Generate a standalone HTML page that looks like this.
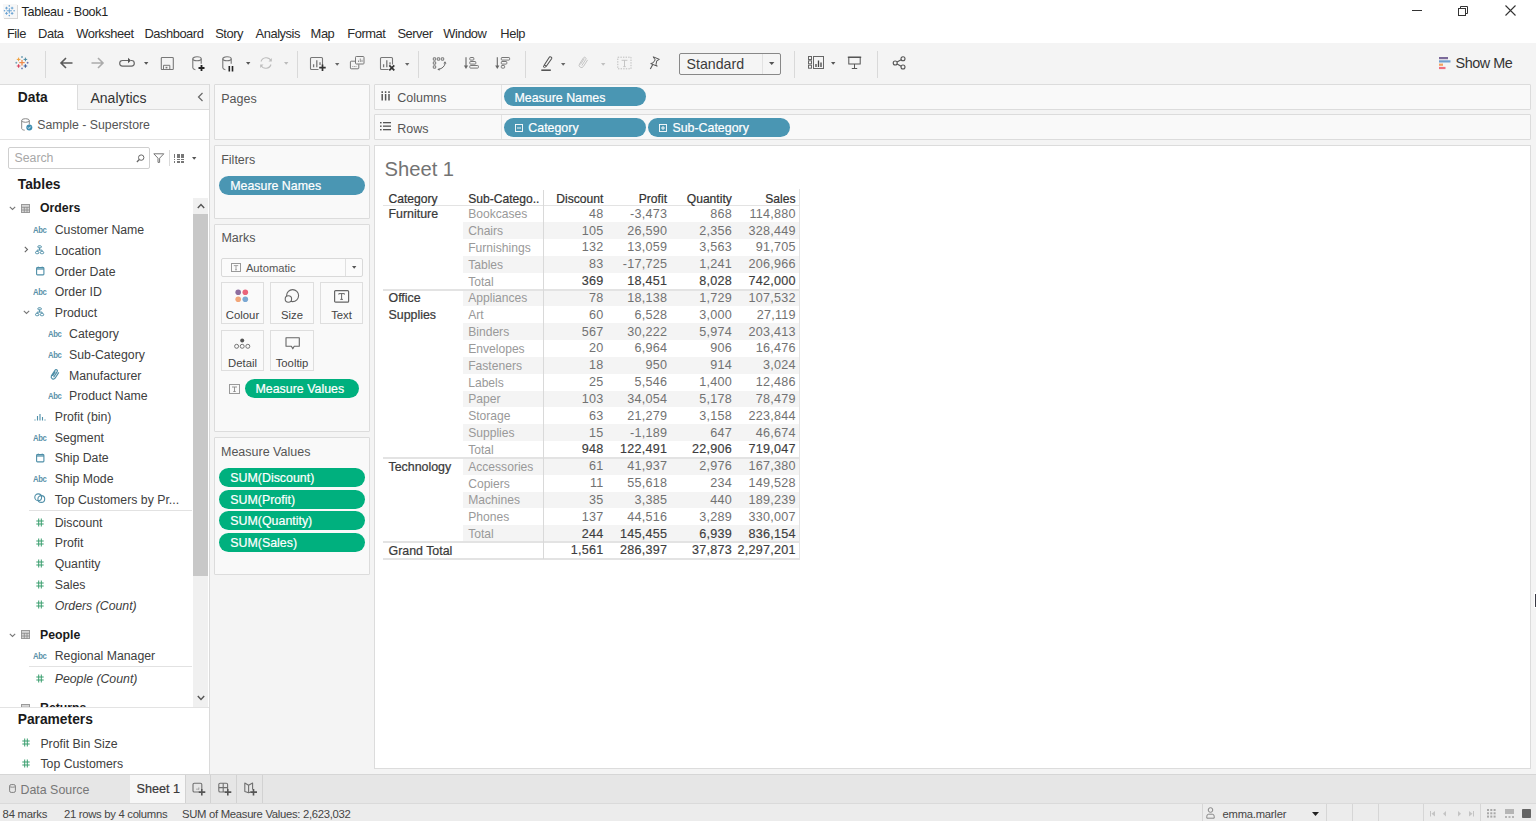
<!DOCTYPE html>
<html><head><meta charset="utf-8">
<style>
*{box-sizing:border-box;margin:0;padding:0}
html,body{width:1536px;height:821px;overflow:hidden;background:#f4f4f4;font-family:"Liberation Sans",sans-serif;color:#333}
.a{position:absolute}
svg.a{overflow:visible}
.t{position:absolute;white-space:nowrap;line-height:1}
.box{position:absolute;background:#f9f9f9;border:1px solid #dcdcdc;border-radius:1px}
</style></head><body>

<div class="a" style="left:0px;top:0px;width:1536px;height:43px;background:#fff;"></div>
<svg class="a" style="left:3px;top:4px;" width="15" height="15" viewBox="0 0 15 15" fill="none"><rect x="0" y="0" width="14" height="14" fill="#f7f7f7"/><rect x="14" y="1" width="1" height="14" fill="#d6d6d6"/><rect x="1" y="14" width="14" height="1" fill="#d6d6d6"/><g stroke="#6aa3d3" stroke-width="1"><path d="M6.3 4.2v5.2M3.7 6.8h5.2"/><path d="M3.5 2.8v2.6M2.2 4.1h2.6M9.1 2.8v2.6M7.8 4.1h2.6M3.5 8.1v2.6M2.2 9.4h2.6M9.1 8.1v2.6M7.8 9.4h2.6"/></g><g fill="#6aa3d3"><circle cx="6.3" cy="1.9" r="0.8"/><circle cx="6.3" cy="11.6" r="0.8"/><circle cx="1.5" cy="6.8" r="0.8"/><circle cx="11.1" cy="6.8" r="0.8"/></g></svg>
<div class="t" style="left:21.50px;top:6.03px;font-size:12.6px;color:#1f1f1f;font-weight:normal;font-style:normal;letter-spacing:-0.3px;">Tableau - Book1</div>
<div class="a" style="left:1412px;top:10px;width:10px;height:1px;background:#333;"></div>
<svg class="a" style="left:1457px;top:5px;" width="12" height="12" viewBox="0 0 12 12" fill="none"><rect x="1.5" y="3.5" width="7" height="7" stroke="#333" stroke-width="1"/><path d="M3.5 3.5V1.5h7v7h-2" stroke="#333" stroke-width="1"/></svg>
<svg class="a" style="left:1505px;top:5px;" width="11" height="11" viewBox="0 0 11 11" fill="none"><path d="M0.5 0.5l10 10M10.5 0.5l-10 10" stroke="#333" stroke-width="1.1"/></svg>
<div class="t" style="left:6.90px;top:28.38px;font-size:12.9px;color:#2b2b2b;font-weight:normal;font-style:normal;letter-spacing:-0.45px;">File</div>
<div class="t" style="left:38.10px;top:28.38px;font-size:12.9px;color:#2b2b2b;font-weight:normal;font-style:normal;letter-spacing:-0.45px;">Data</div>
<div class="t" style="left:76.20px;top:28.38px;font-size:12.9px;color:#2b2b2b;font-weight:normal;font-style:normal;letter-spacing:-0.45px;">Worksheet</div>
<div class="t" style="left:144.40px;top:28.38px;font-size:12.9px;color:#2b2b2b;font-weight:normal;font-style:normal;letter-spacing:-0.45px;">Dashboard</div>
<div class="t" style="left:215.20px;top:28.38px;font-size:12.9px;color:#2b2b2b;font-weight:normal;font-style:normal;letter-spacing:-0.45px;">Story</div>
<div class="t" style="left:255.60px;top:28.38px;font-size:12.9px;color:#2b2b2b;font-weight:normal;font-style:normal;letter-spacing:-0.45px;">Analysis</div>
<div class="t" style="left:310.60px;top:28.38px;font-size:12.9px;color:#2b2b2b;font-weight:normal;font-style:normal;letter-spacing:-0.45px;">Map</div>
<div class="t" style="left:347.30px;top:28.38px;font-size:12.9px;color:#2b2b2b;font-weight:normal;font-style:normal;letter-spacing:-0.45px;">Format</div>
<div class="t" style="left:397.40px;top:28.38px;font-size:12.9px;color:#2b2b2b;font-weight:normal;font-style:normal;letter-spacing:-0.45px;">Server</div>
<div class="t" style="left:443.30px;top:28.38px;font-size:12.9px;color:#2b2b2b;font-weight:normal;font-style:normal;letter-spacing:-0.45px;">Window</div>
<div class="t" style="left:500.30px;top:28.38px;font-size:12.9px;color:#2b2b2b;font-weight:normal;font-style:normal;letter-spacing:-0.45px;">Help</div>
<div class="a" style="left:0px;top:43px;width:1536px;height:41px;background:#f4f4f4;"></div>
<div class="a" style="left:45px;top:51px;width:1px;height:27px;background:#d9d9d9;"></div>
<div class="a" style="left:297px;top:51px;width:1px;height:27px;background:#d9d9d9;"></div>
<div class="a" style="left:418px;top:51px;width:1px;height:27px;background:#d9d9d9;"></div>
<div class="a" style="left:525px;top:51px;width:1px;height:27px;background:#d9d9d9;"></div>
<div class="a" style="left:794px;top:51px;width:1px;height:27px;background:#d9d9d9;"></div>
<div class="a" style="left:877px;top:51px;width:1px;height:27px;background:#d9d9d9;"></div>
<svg class="a" style="left:14px;top:55px;" width="16" height="16" viewBox="0 0 16 16" fill="none"><g stroke-linecap="butt"><path d="M8 5v5.4M5.3 7.7h5.4" stroke="#f08a4b" stroke-width="1.3"/><path d="M4.6 2.6v3.6M2.8 4.4h3.6" stroke="#f0a03c" stroke-width="1"/><path d="M11.4 2.6v3.6M9.6 4.4h3.6" stroke="#4c8aa3" stroke-width="1"/><path d="M4.6 9.2v3.6M2.8 11h3.6" stroke="#d9415c" stroke-width="1.1"/><path d="M11.4 9.2v3.6M9.6 11h3.6" stroke="#3d5f9c" stroke-width="1.1"/></g><circle cx="8" cy="2" r="0.95" fill="#6f9fb4"/><circle cx="8" cy="13.4" r="0.95" fill="#7683b3"/><circle cx="2.3" cy="7.7" r="0.95" fill="#79a6b6"/><circle cx="13.6" cy="7.7" r="0.95" fill="#6e72aa"/></svg>
<svg class="a" style="left:60px;top:57px;" width="13" height="12" viewBox="0 0 13 12" fill="none"><path d="M12.5 6H1.2M6 1L1 6l5 5" stroke="#5a5a5a" stroke-width="1.6"/></svg>
<svg class="a" style="left:91px;top:57px;" width="13" height="12" viewBox="0 0 13 12" fill="none"><path d="M0.5 6h11.3M7 1l5 5-5 5" stroke="#ababab" stroke-width="1.6"/></svg>
<svg class="a" style="left:119px;top:57px;" width="17" height="11" viewBox="0 0 17 11" fill="none"><path d="M9 3.5H3.5a2.8 2.8 0 0 0 0 5.6h9a2.8 2.8 0 0 0 0-5.6H12" stroke="#666" stroke-width="1.2"/><path d="M9 0.8l3 2.7-3 2.7z" fill="#555"/></svg>
<svg class="a" style="left:144.3px;top:62.1px;" width="5" height="3" viewBox="0 0 5 3" fill="none"><path d="M0 0h4.4l-2.2 2.7z" fill="#555"/></svg>
<svg class="a" style="left:160px;top:56px;" width="14" height="14" viewBox="0 0 14 14" fill="none"><rect x="1.3" y="1.5" width="12" height="12" rx="0.8" stroke="#777" stroke-width="1.1"/><path d="M3.5 13.5V9.3h6.3v4.2" stroke="#777" stroke-width="1"/><rect x="5.6" y="10.8" width="1.8" height="1.6" fill="#777"/></svg>
<svg class="a" style="left:192px;top:56px;" width="13" height="16" viewBox="0 0 13 16" fill="none"><ellipse cx="5" cy="2.8" rx="4.2" ry="2" stroke="#777" stroke-width="1.1"/><path d="M0.8 2.8v9c0 1 1 1.6 2.6 1.9M9.2 2.8v5" stroke="#777" stroke-width="1.1"/><path d="M9.5 9v6M6.5 12h6" stroke="#222" stroke-width="1.8"/></svg>
<svg class="a" style="left:222px;top:56px;" width="13" height="16" viewBox="0 0 13 16" fill="none"><ellipse cx="5" cy="2.8" rx="4.2" ry="2" stroke="#777" stroke-width="1.1"/><path d="M0.8 2.8v9c0 1 1 1.6 2.6 1.9M9.2 2.8v5" stroke="#777" stroke-width="1.1"/><path d="M7.3 10v5.5M10.5 10v5.5" stroke="#222" stroke-width="1.6"/></svg>
<svg class="a" style="left:245.5px;top:62.1px;" width="5" height="3" viewBox="0 0 5 3" fill="none"><path d="M0 0h4.4l-2.2 2.7z" fill="#555"/></svg>
<svg class="a" style="left:259px;top:56px;" width="14" height="14" viewBox="0 0 14 14" fill="none"><path d="M2 5.5A5.5 5.5 0 0 1 12 4.5M12 8.5A5.5 5.5 0 0 1 2 9.5" stroke="#bdbdbd" stroke-width="1.1"/><path d="M12.8 2v3.5H9.5z" fill="#bdbdbd"/><path d="M1.2 12V8.5H4.5z" fill="#bdbdbd"/></svg>
<svg class="a" style="left:284.0px;top:62.1px;" width="5" height="3" viewBox="0 0 5 3" fill="none"><path d="M0 0h4.4l-2.2 2.7z" fill="#bbb"/></svg>
<svg class="a" style="left:309px;top:56px;" width="17" height="17" viewBox="0 0 17 17" fill="none"><rect x="1.5" y="1.5" width="12" height="12" rx="1" stroke="#777" stroke-width="1.1"/><path d="M4.6 11.2V8.2M7.8 11.2V4.2M11 11.2V6.2" stroke="#777" stroke-width="1.3"/><rect x="9.5" y="9" width="7" height="7" fill="#f4f4f4"/><path d="M13.5 8.5v6.5M10.2 11.7h6.5" stroke="#333" stroke-width="1.7"/></svg>
<svg class="a" style="left:335.1px;top:62.6px;" width="5" height="3" viewBox="0 0 5 3" fill="none"><path d="M0 0h4.4l-2.2 2.7z" fill="#666"/></svg>
<svg class="a" style="left:349px;top:55px;" width="16" height="15" viewBox="0 0 16 15" fill="none"><rect x="6.5" y="1.5" width="8.5" height="7.5" rx="0.8" stroke="#777" stroke-width="1"/><path d="M9.5 7V5.5M11.3 7V3.5M13 7V4.8" stroke="#888" stroke-width="0.9"/><path d="M6.2 6.2H2.2a0.8 0.8 0 0 0-.8.8v6a0.8 0.8 0 0 0 .8.8h6.8a0.8 0.8 0 0 0 .8-.8V9.3" stroke="#777" stroke-width="1"/><path d="M3.8 12v-1M5.4 12v-1M7 12v-1" stroke="#999" stroke-width="0.9"/></svg>
<svg class="a" style="left:379px;top:56px;" width="17" height="17" viewBox="0 0 17 17" fill="none"><rect x="1.5" y="1.5" width="12" height="12" rx="1" stroke="#777" stroke-width="1.1"/><path d="M4.6 11.2V8.2M7.8 11.2V4.2M11 11.2V6.2" stroke="#777" stroke-width="1.3"/><rect x="9.5" y="8.5" width="7" height="7.5" fill="#f4f4f4"/><path d="M10.3 9.3l5 5M15.3 9.3l-5 5" stroke="#333" stroke-width="1.7"/></svg>
<svg class="a" style="left:404.8px;top:62.6px;" width="5" height="3" viewBox="0 0 5 3" fill="none"><path d="M0 0h4.4l-2.2 2.7z" fill="#666"/></svg>
<svg class="a" style="left:432px;top:57px;" width="16" height="14" viewBox="0 0 16 14" fill="none"><g stroke="#777" stroke-width="1"><rect x="1.3" y="0.8" width="2.4" height="2.4" rx="0.2"/><rect x="5.3" y="0.8" width="2.4" height="2.4" rx="0.2"/><rect x="9.3" y="0.8" width="2.4" height="2.4" rx="0.2"/><rect x="1.3" y="4.8" width="2.4" height="2.4" rx="0.2"/><rect x="1.3" y="8.8" width="2.4" height="2.4" rx="0.2"/></g><path d="M13.2 6.3C12.6 9.3 10.3 11.6 6.5 12.4" stroke="#666" stroke-width="1"/><path d="M14.5 6.4l-1.5-2.2-1.6 2.2zM5.3 12.2l2.2 1.6 0.1-2.6z" fill="#666"/></svg>
<svg class="a" style="left:463px;top:56px;" width="17" height="15" viewBox="0 0 17 15" fill="none"><path d="M3 1.3v9" stroke="#666" stroke-width="1.1"/><path d="M0.9 9.5h4.2L3 12.9z" fill="#666"/><g stroke="#777" stroke-width="1"><rect x="6.8" y="1.5" width="4" height="2.6" rx="0.7"/><rect x="6.8" y="5.5" width="6" height="2.6" rx="0.7"/><rect x="6.8" y="9.5" width="8.6" height="2.6" rx="0.7"/></g></svg>
<svg class="a" style="left:494px;top:56px;" width="17" height="15" viewBox="0 0 17 15" fill="none"><path d="M3.3 1.3v9" stroke="#666" stroke-width="1.1"/><path d="M1.2 9.5h4.2L3.3 12.9z" fill="#666"/><g stroke="#777" stroke-width="1"><rect x="7.3" y="1.5" width="8.3" height="2.6" rx="0.7"/><rect x="7.3" y="5.5" width="5.5" height="2.6" rx="0.7"/><rect x="7.3" y="9.5" width="3.3" height="2.6" rx="0.7"/></g></svg>
<svg class="a" style="left:540px;top:55px;" width="13" height="17" viewBox="0 0 13 17" fill="none"><path d="M9.3 2.2a1 1 0 0 1 1.4-.3l.6.4a1 1 0 0 1 .3 1.4L6.3 11.3 4.3 10z" stroke="#555" stroke-width="1.1" stroke-linejoin="round"/><path d="M4.3 10l-1 2 1.5.5 1.5-1.2" stroke="#555" stroke-width="0.9"/><path d="M1.3 15.2h9.5" stroke="#555" stroke-width="1.6"/></svg>
<svg class="a" style="left:561.3px;top:62.6px;" width="5" height="3" viewBox="0 0 5 3" fill="none"><path d="M0 0h4.4l-2.2 2.7z" fill="#666"/></svg>
<svg class="a" style="left:578px;top:56px;" width="11" height="14" viewBox="0 0 11 14" fill="none"><path d="M3.8 9.6l4-6.2a1.4 1.4 0 0 0-2.4-1.5L1.5 8a2.3 2.3 0 0 0 3.9 2.5l4.2-6.6M6.3 2.6L2.4 8.5" stroke="#c4c4c4" stroke-width="1"/></svg>
<svg class="a" style="left:600.5999999999999px;top:62.6px;" width="5" height="3" viewBox="0 0 5 3" fill="none"><path d="M0 0h4.4l-2.2 2.7z" fill="#c0c0c0"/></svg>
<svg class="a" style="left:617px;top:56px;" width="15" height="14" viewBox="0 0 15 14" fill="none"><rect x="0.8" y="1.2" width="13.2" height="11.6" stroke="#bdbdbd" stroke-width="1" stroke-dasharray="1.4 1.2"/><path d="M4.6 4.3h5.8M7.5 4.3v6.3M6.3 10.6h2.4" stroke="#c0c0c0" stroke-width="0.9"/></svg>
<svg class="a" style="left:648px;top:56px;" width="13" height="14" viewBox="0 0 13 14" fill="none"><path d="M5.2 0.8l6.2 2.6-2.6 1.3-0.8 3.7 1.2 1.8-6.5-2.6 2.3-0.7 2.2-3z" stroke="#555" stroke-width="1" stroke-linejoin="round"/><path d="M4.8 8.6L2.3 13" stroke="#555" stroke-width="1.1"/></svg>
<div class="a" style="left:679px;top:53px;width:102px;height:22px;border:1px solid #888;border-radius:2px;background:#f5f5f5"></div>
<div class="a" style="left:762px;top:54px;width:1px;height:20px;background:#e2e2e2;"></div>
<div class="t" style="left:686.50px;top:57.18px;font-size:14.2px;color:#3c3c3c;font-weight:normal;font-style:normal;">Standard</div>
<svg class="a" style="left:768.8px;top:62.2px;" width="6" height="4" viewBox="0 0 6 4" fill="none"><path d="M0 0h5.4L2.7 3z" fill="#555"/></svg>
<svg class="a" style="left:808px;top:56px;" width="16" height="13" viewBox="0 0 16 13" fill="none"><g stroke="#666" stroke-width="1"><rect x="0.5" y="0.5" width="3" height="3"/><rect x="0.5" y="4.8" width="3" height="3"/><rect x="0.5" y="9.2" width="3" height="3"/><rect x="5.5" y="0.5" width="10" height="12"/></g><path d="M8 11V8M10.5 11V4.5M13 11V6.5" stroke="#444" stroke-width="1.3"/></svg>
<svg class="a" style="left:830.8px;top:62.1px;" width="5" height="3" viewBox="0 0 5 3" fill="none"><path d="M0 0h4.4l-2.2 2.7z" fill="#555"/></svg>
<svg class="a" style="left:847px;top:56px;" width="15" height="14" viewBox="0 0 15 14" fill="none"><path d="M0.8 1.3h13.4" stroke="#555" stroke-width="1.4"/><rect x="1.8" y="1.3" width="11.4" height="6.7" stroke="#555" stroke-width="1"/><path d="M7.5 8v4M4.8 12.5h5.4" stroke="#555" stroke-width="1"/></svg>
<svg class="a" style="left:892px;top:56px;" width="14" height="14" viewBox="0 0 14 14" fill="none"><g stroke="#555" stroke-width="1.1"><circle cx="3.2" cy="7" r="2"/><circle cx="11" cy="2.8" r="2"/><circle cx="11" cy="11" r="2"/><path d="M5 6l4.2-2.2M5 8l4.2 2.2"/></g></svg>
<svg class="a" style="left:1439px;top:57px;" width="12" height="13" viewBox="0 0 12 13" fill="none"><rect x="0" y="0" width="9" height="2.2" fill="#7b6a9a"/><rect x="0" y="3.3" width="11.5" height="2.2" fill="#6f9fd0"/><rect x="0" y="6.6" width="4" height="2.2" fill="#f2a15f"/><rect x="0" y="9.9" width="6.5" height="2.2" fill="#ef7080"/></svg>
<div class="t" style="left:1455.50px;top:55.81px;font-size:14.4px;color:#333;font-weight:normal;font-style:normal;letter-spacing:-0.45px;">Show Me</div>
<div class="a" style="left:0px;top:84px;width:209px;height:690px;background:#fff;"></div>
<div class="a" style="left:209px;top:84px;width:1px;height:690px;background:#dadada;"></div>
<div class="a" style="left:77px;top:84px;width:132px;height:26px;background:#f5f5f5;border-left:1px solid #dcdcdc;border-bottom:1px solid #dcdcdc;border-top:1px solid #dcdcdc"></div>
<div class="a" style="left:0px;top:84px;width:77px;height:1px;background:#dcdcdc;"></div>
<div class="t" style="left:17.80px;top:90.92px;font-size:13.8px;color:#1a1a1a;font-weight:bold;font-style:normal;">Data</div>
<div class="t" style="left:90.50px;top:90.95px;font-size:14px;color:#333;font-weight:normal;font-style:normal;">Analytics</div>
<svg class="a" style="left:197px;top:92px;" width="7" height="10" viewBox="0 0 7 10" fill="none"><path d="M5.5 1L1.5 5l4 4" stroke="#666" stroke-width="1.2"/></svg>
<svg class="a" style="left:21px;top:118px;" width="12" height="13" viewBox="0 0 12 13" fill="none"><ellipse cx="4.5" cy="2.5" rx="3.8" ry="1.8" stroke="#888" stroke-width="1"/><path d="M0.7 2.5v8c0 .9 1.1 1.5 3 1.7M8.3 2.5v4" stroke="#888" stroke-width="1"/><circle cx="8.3" cy="9.5" r="3" fill="#3e8db0"/><path d="M6.9 9.5l1 1 1.8-1.9" stroke="#fff" stroke-width="0.9"/></svg>
<div class="t" style="left:37.20px;top:119.29px;font-size:12.3px;color:#555;font-weight:normal;font-style:normal;">Sample - Superstore</div>
<div class="a" style="left:0px;top:139px;width:209px;height:1px;background:#e3e3e3;"></div>
<div class="a" style="left:8px;top:147px;width:142px;height:22px;border:1px solid #cfcfcf;border-radius:2px;background:#fff"></div>
<div class="t" style="left:14.50px;top:152.39px;font-size:12.3px;color:#a8a8a8;font-weight:normal;font-style:normal;">Search</div>
<svg class="a" style="left:136px;top:153.5px;" width="9" height="10" viewBox="0 0 9 10" fill="none"><circle cx="5.2" cy="3.6" r="2.7" stroke="#666" stroke-width="1"/><path d="M3.3 5.5L0.9 8" stroke="#666" stroke-width="1.2"/></svg>
<svg class="a" style="left:153px;top:153px;" width="12" height="11" viewBox="0 0 12 11" fill="none"><path d="M0.8 0.8h10L6.6 5.2v4.2H5V5.2z" stroke="#777" stroke-width="1" stroke-linejoin="round"/></svg>
<div class="a" style="left:169px;top:150px;width:1px;height:16px;background:#dadada;"></div>
<svg class="a" style="left:174px;top:154px;" width="11" height="9" viewBox="0 0 11 9" fill="none"><g fill="#777" shape-rendering="crispEdges"><rect x="0" y="0" width="1.2" height="1.5"/><rect x="2.5" y="0" width="3" height="1.5"/><rect x="6.5" y="0" width="3.5" height="1.5"/><rect x="0" y="2.4" width="1.2" height="1.5"/><rect x="2.5" y="2.4" width="3" height="1.5"/><rect x="6.5" y="2.4" width="3.5" height="1.5"/><rect x="0" y="4.8" width="1.2" height="1.5"/><rect x="2.5" y="4.8" width="3" height="1.5"/><rect x="6.5" y="4.8" width="3.5" height="1.5"/><rect x="0" y="7.2" width="1.2" height="1.5"/><rect x="2.5" y="7.2" width="3" height="1.5"/><rect x="6.5" y="7.2" width="3.5" height="1.5"/></g></svg>
<svg class="a" style="left:191.8px;top:157.1px;" width="5" height="3" viewBox="0 0 5 3" fill="none"><path d="M0 0h4.4l-2.2 2.7z" fill="#555"/></svg>
<div class="t" style="left:17.80px;top:178.22px;font-size:13.8px;color:#1a1a1a;font-weight:bold;font-style:normal;">Tables</div>
<svg class="a" style="left:8.5px;top:206px;" width="7" height="5" viewBox="0 0 7 5" fill="none"><path d="M0.8 0.8L3.5 3.5 6.2 0.8" stroke="#777" stroke-width="1.1"/></svg>
<svg class="a" style="left:21px;top:203.5px;" width="9" height="9" viewBox="0 0 9 9" fill="none"><rect x="0.5" y="0.5" width="8" height="8" fill="#d6d6d6" stroke="#9a9a9a"/><path d="M0.5 3.3h8M0.5 6h8M3.3 3v5.5M6 3v5.5" stroke="#8a8a8a" stroke-width="0.8"/></svg>
<div class="t" style="left:40.00px;top:202.19px;font-size:12.3px;color:#1a1a1a;font-weight:bold;font-style:normal;">Orders</div>
<div class="t" style="left:33.3px;top:226.2px;font-size:8.4px;font-weight:bold;color:#5a91a9;letter-spacing:-0.4px;transform:scaleX(0.92);transform-origin:left">Abc</div>
<div class="t" style="left:54.70px;top:224.14px;font-size:12.3px;color:#404040;font-weight:normal;font-style:normal;">Customer Name</div>
<svg class="a" style="left:35px;top:245.1px;" width="10" height="10" viewBox="0 0 10 10" fill="none"><g stroke="#4f8fa8" stroke-width="1"><rect x="2.8" y="0.8" width="3.6" height="2" rx="1"/><path d="M4.6 2.8v2.3M2.1 6.4V5.1h5v1.3"/><rect x="0.5" y="6.5" width="3.4" height="2.2" rx="1.1"/><rect x="5.3" y="6.5" width="3.4" height="2.2" rx="1.1"/></g></svg>
<div class="t" style="left:54.70px;top:244.99px;font-size:12.3px;color:#404040;font-weight:normal;font-style:normal;">Location</div>
<svg class="a" style="left:24px;top:245.79999999999998px;" width="5" height="7" viewBox="0 0 5 7" fill="none"><path d="M0.8 0.8L3.5 3.5 0.8 6.2" stroke="#666" stroke-width="1.1"/></svg>
<svg class="a" style="left:35.5px;top:265.7px;" width="9" height="10" viewBox="0 0 9 10" fill="none"><rect x="0.6" y="1.6" width="7.3" height="7.3" rx="0.8" stroke="#4f8fa8" stroke-width="1.1"/><rect x="0.6" y="1.6" width="7.3" height="2.4" fill="#4f8fa8" opacity="0.6"/><path d="M2.3 0.6v1.5M6.2 0.6v1.5" stroke="#4f8fa8" stroke-width="1"/></svg>
<div class="t" style="left:54.70px;top:265.59px;font-size:12.3px;color:#404040;font-weight:normal;font-style:normal;">Order Date</div>
<div class="t" style="left:33.3px;top:288.1px;font-size:8.4px;font-weight:bold;color:#5a91a9;letter-spacing:-0.4px;transform:scaleX(0.92);transform-origin:left">Abc</div>
<div class="t" style="left:54.70px;top:286.09px;font-size:12.3px;color:#404040;font-weight:normal;font-style:normal;">Order ID</div>
<svg class="a" style="left:35px;top:307.3px;" width="10" height="10" viewBox="0 0 10 10" fill="none"><g stroke="#4f8fa8" stroke-width="1"><rect x="2.8" y="0.8" width="3.6" height="2" rx="1"/><path d="M4.6 2.8v2.3M2.1 6.4V5.1h5v1.3"/><rect x="0.5" y="6.5" width="3.4" height="2.2" rx="1.1"/><rect x="5.3" y="6.5" width="3.4" height="2.2" rx="1.1"/></g></svg>
<div class="t" style="left:54.70px;top:307.19px;font-size:12.3px;color:#404040;font-weight:normal;font-style:normal;">Product</div>
<svg class="a" style="left:23px;top:310.3px;" width="7" height="5" viewBox="0 0 7 5" fill="none"><path d="M0.8 0.8L3.5 3.5 6.2 0.8" stroke="#777" stroke-width="1.1"/></svg>
<div class="t" style="left:48.1px;top:330.1px;font-size:8.4px;font-weight:bold;color:#5a91a9;letter-spacing:-0.4px;transform:scaleX(0.92);transform-origin:left">Abc</div>
<div class="t" style="left:69.00px;top:328.09px;font-size:12.3px;color:#404040;font-weight:normal;font-style:normal;">Category</div>
<div class="t" style="left:48.1px;top:350.9px;font-size:8.4px;font-weight:bold;color:#5a91a9;letter-spacing:-0.4px;transform:scaleX(0.92);transform-origin:left">Abc</div>
<div class="t" style="left:69.00px;top:348.89px;font-size:12.3px;color:#404040;font-weight:normal;font-style:normal;">Sub-Category</div>
<svg class="a" style="left:49.5px;top:369.3px;" width="10" height="11" viewBox="0 0 10 11" fill="none"><path d="M3.6 8.2l3.6-5.6a1.3 1.3 0 0 0-2.2-1.4L1.4 6.9a2.2 2.2 0 0 0 3.7 2.3L8.8 3.4M5.4 2.5L2.6 7" stroke="#4f8fa8" stroke-width="1.2"/></svg>
<div class="t" style="left:69.00px;top:369.69px;font-size:12.3px;color:#404040;font-weight:normal;font-style:normal;">Manufacturer</div>
<div class="t" style="left:48.1px;top:392.3px;font-size:8.4px;font-weight:bold;color:#5a91a9;letter-spacing:-0.4px;transform:scaleX(0.92);transform-origin:left">Abc</div>
<div class="t" style="left:69.00px;top:390.29px;font-size:12.3px;color:#404040;font-weight:normal;font-style:normal;">Product Name</div>
<svg class="a" style="left:33.5px;top:412.6px;" width="12" height="8" viewBox="0 0 12 8" fill="none"><path d="M1 7.5v-1M3.5 7.5V3M6 7.5V1M8.5 7.5V4M11 7.5v-1" stroke="#4f8fa8" stroke-width="1.1"/></svg>
<div class="t" style="left:54.70px;top:410.99px;font-size:12.3px;color:#404040;font-weight:normal;font-style:normal;">Profit (bin)</div>
<div class="t" style="left:33.3px;top:433.7px;font-size:8.4px;font-weight:bold;color:#5a91a9;letter-spacing:-0.4px;transform:scaleX(0.92);transform-origin:left">Abc</div>
<div class="t" style="left:54.70px;top:431.69px;font-size:12.3px;color:#404040;font-weight:normal;font-style:normal;">Segment</div>
<svg class="a" style="left:35.5px;top:452.5px;" width="9" height="10" viewBox="0 0 9 10" fill="none"><rect x="0.6" y="1.6" width="7.3" height="7.3" rx="0.8" stroke="#4f8fa8" stroke-width="1.1"/><rect x="0.6" y="1.6" width="7.3" height="2.4" fill="#4f8fa8" opacity="0.6"/><path d="M2.3 0.6v1.5M6.2 0.6v1.5" stroke="#4f8fa8" stroke-width="1"/></svg>
<div class="t" style="left:54.70px;top:452.39px;font-size:12.3px;color:#404040;font-weight:normal;font-style:normal;">Ship Date</div>
<div class="t" style="left:33.3px;top:475.1px;font-size:8.4px;font-weight:bold;color:#5a91a9;letter-spacing:-0.4px;transform:scaleX(0.92);transform-origin:left">Abc</div>
<div class="t" style="left:54.70px;top:473.09px;font-size:12.3px;color:#404040;font-weight:normal;font-style:normal;">Ship Mode</div>
<svg class="a" style="left:34px;top:493.4px;" width="12" height="10" viewBox="0 0 12 10" fill="none"><g stroke="#4f8fa8" stroke-width="1.1"><circle cx="4.2" cy="4.3" r="3.4"/><circle cx="7.3" cy="6" r="3.4"/></g></svg>
<div class="t" style="left:54.70px;top:493.79px;font-size:12.3px;color:#404040;font-weight:normal;font-style:normal;">Top Customers by Pr...</div>
<svg class="a" style="left:36px;top:517.6px;" width="8" height="9" viewBox="0 0 8 9" fill="none"><path d="M2.7 0.5v8M5.3 0.5v8M0.3 3h7.4M0.3 6h7.4" stroke="#3a9e6e" stroke-width="1"/></svg>
<div class="t" style="left:54.70px;top:516.99px;font-size:12.3px;color:#404040;font-weight:normal;font-style:normal;">Discount</div>
<svg class="a" style="left:36px;top:538.0px;" width="8" height="9" viewBox="0 0 8 9" fill="none"><path d="M2.7 0.5v8M5.3 0.5v8M0.3 3h7.4M0.3 6h7.4" stroke="#3a9e6e" stroke-width="1"/></svg>
<div class="t" style="left:54.70px;top:537.39px;font-size:12.3px;color:#404040;font-weight:normal;font-style:normal;">Profit</div>
<svg class="a" style="left:36px;top:559.0px;" width="8" height="9" viewBox="0 0 8 9" fill="none"><path d="M2.7 0.5v8M5.3 0.5v8M0.3 3h7.4M0.3 6h7.4" stroke="#3a9e6e" stroke-width="1"/></svg>
<div class="t" style="left:54.70px;top:558.39px;font-size:12.3px;color:#404040;font-weight:normal;font-style:normal;">Quantity</div>
<svg class="a" style="left:36px;top:579.6px;" width="8" height="9" viewBox="0 0 8 9" fill="none"><path d="M2.7 0.5v8M5.3 0.5v8M0.3 3h7.4M0.3 6h7.4" stroke="#3a9e6e" stroke-width="1"/></svg>
<div class="t" style="left:54.70px;top:578.99px;font-size:12.3px;color:#404040;font-weight:normal;font-style:normal;">Sales</div>
<svg class="a" style="left:36px;top:600.3px;" width="8" height="9" viewBox="0 0 8 9" fill="none"><path d="M2.7 0.5v8M5.3 0.5v8M0.3 3h7.4M0.3 6h7.4" stroke="#3a9e6e" stroke-width="1"/></svg>
<div class="t" style="left:54.70px;top:599.69px;font-size:12.3px;color:#404040;font-weight:normal;font-style:italic;">Orders (Count)</div>
<div class="t" style="left:33.3px;top:652.1px;font-size:8.4px;font-weight:bold;color:#5a91a9;letter-spacing:-0.4px;transform:scaleX(0.92);transform-origin:left">Abc</div>
<div class="t" style="left:54.70px;top:650.09px;font-size:12.3px;color:#404040;font-weight:normal;font-style:normal;">Regional Manager</div>
<svg class="a" style="left:36px;top:673.9px;" width="8" height="9" viewBox="0 0 8 9" fill="none"><path d="M2.7 0.5v8M5.3 0.5v8M0.3 3h7.4M0.3 6h7.4" stroke="#3a9e6e" stroke-width="1"/></svg>
<div class="t" style="left:54.70px;top:673.29px;font-size:12.3px;color:#404040;font-weight:normal;font-style:italic;">People (Count)</div>
<div class="a" style="left:29px;top:510px;width:163px;height:1px;background:#e2e2e2;"></div>
<div class="a" style="left:29px;top:666px;width:163px;height:1px;background:#e2e2e2;"></div>
<svg class="a" style="left:8.5px;top:633px;" width="7" height="5" viewBox="0 0 7 5" fill="none"><path d="M0.8 0.8L3.5 3.5 6.2 0.8" stroke="#777" stroke-width="1.1"/></svg>
<svg class="a" style="left:21px;top:630px;" width="9" height="9" viewBox="0 0 9 9" fill="none"><rect x="0.5" y="0.5" width="8" height="8" fill="#d6d6d6" stroke="#9a9a9a"/><path d="M0.5 3.3h8M0.5 6h8M3.3 3v5.5M6 3v5.5" stroke="#8a8a8a" stroke-width="0.8"/></svg>
<div class="t" style="left:40.00px;top:628.69px;font-size:12.3px;color:#1a1a1a;font-weight:bold;font-style:normal;">People</div>
<svg class="a" style="left:8.5px;top:707px;" width="7" height="5" viewBox="0 0 7 5" fill="none"><path d="M0.8 0.8L3.5 3.5 6.2 0.8" stroke="#777" stroke-width="1.1"/></svg>
<svg class="a" style="left:21px;top:703.5px;" width="9" height="9" viewBox="0 0 9 9" fill="none"><rect x="0.5" y="0.5" width="8" height="8" fill="#d6d6d6" stroke="#9a9a9a"/><path d="M0.5 3.3h8M0.5 6h8M3.3 3v5.5M6 3v5.5" stroke="#8a8a8a" stroke-width="0.8"/></svg>
<div class="t" style="left:40.00px;top:702.39px;font-size:12.3px;color:#1a1a1a;font-weight:bold;font-style:normal;">Returns</div>
<div class="a" style="left:193px;top:198px;width:15px;height:509px;background:#f0f0f0;"></div>
<div class="a" style="left:193px;top:214px;width:15px;height:362px;background:#c8c8c8;"></div>
<svg class="a" style="left:196.5px;top:203px;" width="8" height="6" viewBox="0 0 8 6" fill="none"><path d="M0.8 5L4 1.5 7.2 5" stroke="#555" stroke-width="1.4"/></svg>
<svg class="a" style="left:196.5px;top:695px;" width="8" height="6" viewBox="0 0 8 6" fill="none"><path d="M0.8 1L4 4.5 7.2 1" stroke="#555" stroke-width="1.4"/></svg>
<div class="a" style="left:0px;top:707px;width:209px;height:67px;background:#fff;"></div>
<div class="a" style="left:0px;top:707px;width:209px;height:1px;background:#e3e3e3;"></div>
<div class="t" style="left:17.70px;top:713.02px;font-size:13.8px;color:#1a1a1a;font-weight:bold;font-style:normal;">Parameters</div>
<svg class="a" style="left:21.5px;top:738.3px;" width="8" height="9" viewBox="0 0 8 9" fill="none"><path d="M2.7 0.5v8M5.3 0.5v8M0.3 3h7.4M0.3 6h7.4" stroke="#3a9e6e" stroke-width="1"/></svg>
<div class="t" style="left:40.40px;top:737.69px;font-size:12.3px;color:#404040;font-weight:normal;font-style:normal;">Profit Bin Size</div>
<svg class="a" style="left:21.5px;top:759.1px;" width="8" height="9" viewBox="0 0 8 9" fill="none"><path d="M2.7 0.5v8M5.3 0.5v8M0.3 3h7.4M0.3 6h7.4" stroke="#3a9e6e" stroke-width="1"/></svg>
<div class="t" style="left:40.40px;top:758.49px;font-size:12.3px;color:#404040;font-weight:normal;font-style:normal;">Top Customers</div>
<div class="box" style="left:214px;top:84px;width:156px;height:56px"></div>
<div class="t" style="left:221.20px;top:93.02px;font-size:12.5px;color:#555;font-weight:normal;font-style:normal;">Pages</div>
<div class="box" style="left:214px;top:145px;width:156px;height:74px"></div>
<div class="t" style="left:221.20px;top:153.92px;font-size:12.5px;color:#555;font-weight:normal;font-style:normal;">Filters</div>
<div class="a" style="left:219px;top:176px;width:146px;height:19px;border-radius:9.5px;background:#4a96b3"></div>
<div class="t" style="left:230.20px;top:180.20px;font-size:12.4px;color:#fff;font-weight:normal;font-style:normal;-webkit-text-stroke:0.2px #fff;">Measure Names</div>
<div class="box" style="left:214px;top:224px;width:156px;height:208px"></div>
<div class="t" style="left:221.40px;top:232.12px;font-size:12.5px;color:#555;font-weight:normal;font-style:normal;">Marks</div>
<div class="a" style="left:221px;top:258px;width:142px;height:19px;border:1px solid #d9d9d9;background:#fbfbfb;border-radius:2px"></div>
<div class="a" style="left:345px;top:259px;width:1px;height:17px;background:#e0e0e0;"></div>
<svg class="a" style="left:231px;top:263px;" width="10" height="9" viewBox="0 0 10 9" fill="none"><rect x="0.5" y="0.5" width="9" height="8" stroke="#999" stroke-width="1"/><path d="M2.8 2.6h4.4M5 2.6v4.2M4 6.8h2" stroke="#999" stroke-width="0.9"/></svg>
<div class="t" style="left:245.90px;top:262.62px;font-size:11.2px;color:#555;font-weight:normal;font-style:normal;">Automatic</div>
<svg class="a" style="left:351.8px;top:266.1px;" width="5" height="3" viewBox="0 0 5 3" fill="none"><path d="M0 0h4.4l-2.2 2.7z" fill="#555"/></svg>
<div class="a" style="left:221px;top:282px;width:43px;height:42px;border:1px solid #dedede;background:#fafafa"></div>
<div class="t" style="left:142.50px;width:200px;top:310.23px;font-size:11.3px;color:#444;font-weight:normal;font-style:normal;text-align:center;">Colour</div>
<div class="a" style="left:270px;top:282px;width:44px;height:42px;border:1px solid #dedede;background:#fafafa"></div>
<div class="t" style="left:192.00px;width:200px;top:310.23px;font-size:11.3px;color:#444;font-weight:normal;font-style:normal;text-align:center;">Size</div>
<div class="a" style="left:320px;top:282px;width:43px;height:42px;border:1px solid #dedede;background:#fafafa"></div>
<div class="t" style="left:241.50px;width:200px;top:310.23px;font-size:11.3px;color:#444;font-weight:normal;font-style:normal;text-align:center;">Text</div>
<div class="a" style="left:221px;top:330px;width:43px;height:41px;border:1px solid #dedede;background:#fafafa"></div>
<div class="t" style="left:142.50px;width:200px;top:358.23px;font-size:11.3px;color:#444;font-weight:normal;font-style:normal;text-align:center;">Detail</div>
<div class="a" style="left:270px;top:330px;width:44px;height:41px;border:1px solid #dedede;background:#fafafa"></div>
<div class="t" style="left:192.00px;width:200px;top:358.23px;font-size:11.3px;color:#444;font-weight:normal;font-style:normal;text-align:center;">Tooltip</div>
<svg class="a" style="left:235px;top:289px;" width="14" height="14" viewBox="0 0 14 14" fill="none"><circle cx="3.2" cy="3.3" r="2.8" fill="#8d6d9e"/><circle cx="10.3" cy="3.3" r="2.8" fill="#ea647b"/><circle cx="3.2" cy="10.3" r="2.8" fill="#f2a679"/><circle cx="10.3" cy="10.3" r="2.8" fill="#7ba8d3"/></svg>
<svg class="a" style="left:284px;top:288px;" width="16" height="16" viewBox="0 0 16 16" fill="none"><circle cx="8.6" cy="7.6" r="6" stroke="#666" stroke-width="1.1"/><circle cx="4.4" cy="11" r="3.2" fill="#fafafa" stroke="#666" stroke-width="1.1"/></svg>
<svg class="a" style="left:334px;top:289.5px;" width="16" height="13" viewBox="0 0 16 13" fill="none"><rect x="0.6" y="0.6" width="14" height="11.6" rx="1" stroke="#666" stroke-width="1.2"/><path d="M4.8 3.6h5.6M4.8 3.6v1M10.4 3.6v1M7.6 3.6v5.8M6.3 9.4h2.6" stroke="#666" stroke-width="1"/></svg>
<svg class="a" style="left:234px;top:336.5px;" width="17" height="12" viewBox="0 0 17 12" fill="none"><circle cx="8.2" cy="3.4" r="2" fill="#555"/><g stroke="#666" stroke-width="0.9"><circle cx="2.6" cy="9.3" r="2"/><circle cx="8.2" cy="9.3" r="2"/><circle cx="13.8" cy="9.3" r="2"/></g></svg>
<svg class="a" style="left:284.5px;top:337px;" width="16" height="14" viewBox="0 0 16 14" fill="none"><path d="M1 0.8h13.3v8.4H9.2L7.8 11.8 6.4 9.2H1z" stroke="#666" stroke-width="1.1" stroke-linejoin="round"/></svg>
<svg class="a" style="left:229px;top:384px;" width="11" height="10" viewBox="0 0 11 10" fill="none"><rect x="0.5" y="0.5" width="10" height="9" stroke="#999" stroke-width="1"/><path d="M3 3h5M5.5 3v4.5M4.3 7.5h2.4" stroke="#888" stroke-width="0.9"/></svg>
<div class="a" style="left:245px;top:379px;width:114px;height:19px;border-radius:9.5px;background:#00b07e"></div>
<div class="t" style="left:255.50px;top:383.20px;font-size:12.4px;color:#fff;font-weight:normal;font-style:normal;-webkit-text-stroke:0.2px #fff;">Measure Values</div>
<div class="box" style="left:214px;top:437px;width:156px;height:138px"></div>
<div class="t" style="left:221.00px;top:445.92px;font-size:12.5px;color:#555;font-weight:normal;font-style:normal;">Measure Values</div>
<div class="a" style="left:219px;top:468px;width:146px;height:19px;border-radius:9.5px;background:#00b07e"></div>
<div class="t" style="left:230.30px;top:472.20px;font-size:12.4px;color:#fff;font-weight:normal;font-style:normal;-webkit-text-stroke:0.2px #fff;">SUM(Discount)</div>
<div class="a" style="left:219px;top:490px;width:146px;height:19px;border-radius:9.5px;background:#00b07e"></div>
<div class="t" style="left:230.30px;top:494.20px;font-size:12.4px;color:#fff;font-weight:normal;font-style:normal;-webkit-text-stroke:0.2px #fff;">SUM(Profit)</div>
<div class="a" style="left:219px;top:511px;width:146px;height:19px;border-radius:9.5px;background:#00b07e"></div>
<div class="t" style="left:230.30px;top:515.20px;font-size:12.4px;color:#fff;font-weight:normal;font-style:normal;-webkit-text-stroke:0.2px #fff;">SUM(Quantity)</div>
<div class="a" style="left:219px;top:533px;width:146px;height:19px;border-radius:9.5px;background:#00b07e"></div>
<div class="t" style="left:230.30px;top:537.20px;font-size:12.4px;color:#fff;font-weight:normal;font-style:normal;-webkit-text-stroke:0.2px #fff;">SUM(Sales)</div>
<div class="box" style="left:374px;top:84px;width:1157px;height:26px"></div>
<div class="a" style="left:501px;top:85px;width:1px;height:24px;background:#e3e3e3;"></div>
<svg class="a" style="left:381px;top:91px;" width="10" height="10" viewBox="0 0 10 10" fill="none"><path d="M1.2 3v6.6M4.6 3v6.6M8 3v6.6" stroke="#555" stroke-width="1.5"/><path d="M1.2 0.3v1.6M4.6 0.3v1.6M8 0.3v1.6" stroke="#555" stroke-width="1.5"/></svg>
<div class="t" style="left:397.20px;top:92.02px;font-size:12.5px;color:#555;font-weight:normal;font-style:normal;">Columns</div>
<div class="a" style="left:504px;top:87.4px;width:142px;height:19px;border-radius:9.5px;background:#4a96b3"></div>
<div class="t" style="left:514.50px;top:91.60px;font-size:12.4px;color:#fff;font-weight:normal;font-style:normal;-webkit-text-stroke:0.2px #fff;">Measure Names</div>
<div class="box" style="left:374px;top:114px;width:1157px;height:26px"></div>
<div class="a" style="left:501px;top:115px;width:1px;height:24px;background:#e3e3e3;"></div>
<svg class="a" style="left:380px;top:122px;" width="11" height="9" viewBox="0 0 11 9" fill="none"><g fill="#555"><rect x="0" y="0" width="1.6" height="1.4"/><rect x="0" y="3.5" width="1.6" height="1.4"/><rect x="0" y="7" width="1.6" height="1.4"/><rect x="3" y="0" width="8" height="1.3"/><rect x="3" y="3.5" width="8" height="1.3"/><rect x="3" y="7" width="8" height="1.3"/></g></svg>
<div class="t" style="left:397.20px;top:123.02px;font-size:12.5px;color:#555;font-weight:normal;font-style:normal;">Rows</div>
<div class="a" style="left:504px;top:118px;width:142px;height:19px;border-radius:9.5px;background:#4a96b3"></div>
<div class="t" style="left:528.30px;top:122.20px;font-size:12.4px;color:#fff;font-weight:normal;font-style:normal;-webkit-text-stroke:0.2px #fff;">Category</div>
<svg class="a" style="left:515px;top:124px;" width="8" height="8" viewBox="0 0 8 8" fill="none"><rect x="0.5" y="0.5" width="7" height="7" stroke="#fff" stroke-width="0.9"/><path d="M2 4h4" stroke="#fff" stroke-width="0.9"/></svg>
<div class="a" style="left:648px;top:118px;width:142px;height:19px;border-radius:9.5px;background:#4a96b3"></div>
<div class="t" style="left:672.40px;top:122.20px;font-size:12.4px;color:#fff;font-weight:normal;font-style:normal;-webkit-text-stroke:0.2px #fff;">Sub-Category</div>
<svg class="a" style="left:659px;top:124px;" width="8" height="8" viewBox="0 0 8 8" fill="none"><rect x="0.5" y="0.5" width="7" height="7" stroke="#fff" stroke-width="0.9"/><path d="M2 4h4M4 2v4" stroke="#fff" stroke-width="0.9"/></svg>
<div class="a" style="left:374px;top:145px;width:1157px;height:624px;background:#fff;border:1px solid #dcdcdc"></div>
<div class="t" style="left:384.50px;top:158.80px;font-size:20.2px;color:#737373;font-weight:normal;font-style:normal;">Sheet 1</div>
<div class="a" style="left:463px;top:222.33px;width:336px;height:16.83px;background:#f4f4f4"></div>
<div class="a" style="left:463px;top:255.99px;width:336px;height:16.83px;background:#f4f4f4"></div>
<div class="a" style="left:463px;top:289.65px;width:336px;height:16.83px;background:#f4f4f4"></div>
<div class="a" style="left:463px;top:323.31px;width:336px;height:16.83px;background:#f4f4f4"></div>
<div class="a" style="left:463px;top:356.97px;width:336px;height:16.83px;background:#f4f4f4"></div>
<div class="a" style="left:463px;top:390.63px;width:336px;height:16.83px;background:#f4f4f4"></div>
<div class="a" style="left:463px;top:424.29px;width:336px;height:16.83px;background:#f4f4f4"></div>
<div class="a" style="left:463px;top:457.95px;width:336px;height:16.83px;background:#f4f4f4"></div>
<div class="a" style="left:463px;top:491.61px;width:336px;height:16.83px;background:#f4f4f4"></div>
<div class="a" style="left:463px;top:525.27px;width:336px;height:16.83px;background:#f4f4f4"></div>
<div class="a" style="left:383px;top:204.70px;width:417px;height:1.8px;background:#e3e3e3"></div>
<div class="a" style="left:383px;top:288.85px;width:417px;height:1.8px;background:#e3e3e3"></div>
<div class="a" style="left:383px;top:457.15px;width:417px;height:1.8px;background:#e3e3e3"></div>
<div class="a" style="left:383px;top:541.30px;width:417px;height:1.8px;background:#e3e3e3"></div>
<div class="a" style="left:383px;top:558.13px;width:417px;height:1.8px;background:#e3e3e3"></div>
<div class="a" style="left:543px;top:190px;width:1px;height:369px;background:#d9d9d9;"></div>
<div class="a" style="left:799px;top:189px;width:1px;height:370px;background:#e3e3e3;"></div>
<div class="t" style="left:388.50px;top:192.56px;font-size:12.1px;color:#333;font-weight:normal;font-style:normal;-webkit-text-stroke:0.22px #333;">Category</div>
<div class="t" style="left:468.20px;top:192.56px;font-size:12.1px;color:#333;font-weight:normal;font-style:normal;-webkit-text-stroke:0.22px #333;">Sub-Catego..</div>
<div class="t" style="right:932.70px;top:192.56px;font-size:12.1px;color:#333;font-weight:normal;font-style:normal;text-align:right;-webkit-text-stroke:0.22px #333;">Discount</div>
<div class="t" style="right:869.00px;top:192.56px;font-size:12.1px;color:#333;font-weight:normal;font-style:normal;text-align:right;-webkit-text-stroke:0.22px #333;">Profit</div>
<div class="t" style="right:804.20px;top:192.56px;font-size:12.1px;color:#333;font-weight:normal;font-style:normal;text-align:right;-webkit-text-stroke:0.22px #333;">Quantity</div>
<div class="t" style="right:740.50px;top:192.56px;font-size:12.1px;color:#333;font-weight:normal;font-style:normal;text-align:right;-webkit-text-stroke:0.22px #333;">Sales</div>
<div class="t" style="left:388.50px;top:208.20px;font-size:12.4px;color:#3a3a3a;font-weight:normal;font-style:normal;-webkit-text-stroke:0.22px #3a3a3a;">Furniture</div>
<div class="t" style="left:468.20px;top:208.26px;font-size:12.1px;color:#999;font-weight:normal;font-style:normal;">Bookcases</div>
<div class="t" style="right:932.40px;top:207.83px;font-size:12.6px;color:#727272;font-weight:normal;font-style:normal;text-align:right;letter-spacing:0.25px;">48</div>
<div class="t" style="right:868.70px;top:207.83px;font-size:12.6px;color:#727272;font-weight:normal;font-style:normal;text-align:right;letter-spacing:0.25px;">-3,473</div>
<div class="t" style="right:803.90px;top:207.83px;font-size:12.6px;color:#727272;font-weight:normal;font-style:normal;text-align:right;letter-spacing:0.25px;">868</div>
<div class="t" style="right:740.20px;top:207.83px;font-size:12.6px;color:#727272;font-weight:normal;font-style:normal;text-align:right;letter-spacing:0.25px;">114,880</div>
<div class="t" style="left:468.20px;top:225.09px;font-size:12.1px;color:#999;font-weight:normal;font-style:normal;">Chairs</div>
<div class="t" style="right:932.40px;top:224.66px;font-size:12.6px;color:#727272;font-weight:normal;font-style:normal;text-align:right;letter-spacing:0.25px;">105</div>
<div class="t" style="right:868.70px;top:224.66px;font-size:12.6px;color:#727272;font-weight:normal;font-style:normal;text-align:right;letter-spacing:0.25px;">26,590</div>
<div class="t" style="right:803.90px;top:224.66px;font-size:12.6px;color:#727272;font-weight:normal;font-style:normal;text-align:right;letter-spacing:0.25px;">2,356</div>
<div class="t" style="right:740.20px;top:224.66px;font-size:12.6px;color:#727272;font-weight:normal;font-style:normal;text-align:right;letter-spacing:0.25px;">328,449</div>
<div class="t" style="left:468.20px;top:241.92px;font-size:12.1px;color:#999;font-weight:normal;font-style:normal;">Furnishings</div>
<div class="t" style="right:932.40px;top:241.49px;font-size:12.6px;color:#727272;font-weight:normal;font-style:normal;text-align:right;letter-spacing:0.25px;">132</div>
<div class="t" style="right:868.70px;top:241.49px;font-size:12.6px;color:#727272;font-weight:normal;font-style:normal;text-align:right;letter-spacing:0.25px;">13,059</div>
<div class="t" style="right:803.90px;top:241.49px;font-size:12.6px;color:#727272;font-weight:normal;font-style:normal;text-align:right;letter-spacing:0.25px;">3,563</div>
<div class="t" style="right:740.20px;top:241.49px;font-size:12.6px;color:#727272;font-weight:normal;font-style:normal;text-align:right;letter-spacing:0.25px;">91,705</div>
<div class="t" style="left:468.20px;top:258.75px;font-size:12.1px;color:#999;font-weight:normal;font-style:normal;">Tables</div>
<div class="t" style="right:932.40px;top:258.32px;font-size:12.6px;color:#727272;font-weight:normal;font-style:normal;text-align:right;letter-spacing:0.25px;">83</div>
<div class="t" style="right:868.70px;top:258.32px;font-size:12.6px;color:#727272;font-weight:normal;font-style:normal;text-align:right;letter-spacing:0.25px;">-17,725</div>
<div class="t" style="right:803.90px;top:258.32px;font-size:12.6px;color:#727272;font-weight:normal;font-style:normal;text-align:right;letter-spacing:0.25px;">1,241</div>
<div class="t" style="right:740.20px;top:258.32px;font-size:12.6px;color:#727272;font-weight:normal;font-style:normal;text-align:right;letter-spacing:0.25px;">206,966</div>
<div class="t" style="left:468.20px;top:275.58px;font-size:12.1px;color:#999;font-weight:normal;font-style:normal;">Total</div>
<div class="t" style="right:932.40px;top:275.15px;font-size:12.6px;color:#3d3d3d;font-weight:normal;font-style:normal;text-align:right;letter-spacing:0.25px;-webkit-text-stroke:0.15px #3d3d3d;">369</div>
<div class="t" style="right:868.70px;top:275.15px;font-size:12.6px;color:#3d3d3d;font-weight:normal;font-style:normal;text-align:right;letter-spacing:0.25px;-webkit-text-stroke:0.15px #3d3d3d;">18,451</div>
<div class="t" style="right:803.90px;top:275.15px;font-size:12.6px;color:#3d3d3d;font-weight:normal;font-style:normal;text-align:right;letter-spacing:0.25px;-webkit-text-stroke:0.15px #3d3d3d;">8,028</div>
<div class="t" style="right:740.20px;top:275.15px;font-size:12.6px;color:#3d3d3d;font-weight:normal;font-style:normal;text-align:right;letter-spacing:0.25px;-webkit-text-stroke:0.15px #3d3d3d;">742,000</div>
<div class="t" style="left:388.50px;top:292.35px;font-size:12.4px;color:#3a3a3a;font-weight:normal;font-style:normal;-webkit-text-stroke:0.22px #3a3a3a;">Office</div>
<div class="t" style="left:468.20px;top:292.41px;font-size:12.1px;color:#999;font-weight:normal;font-style:normal;">Appliances</div>
<div class="t" style="right:932.40px;top:291.98px;font-size:12.6px;color:#727272;font-weight:normal;font-style:normal;text-align:right;letter-spacing:0.25px;">78</div>
<div class="t" style="right:868.70px;top:291.98px;font-size:12.6px;color:#727272;font-weight:normal;font-style:normal;text-align:right;letter-spacing:0.25px;">18,138</div>
<div class="t" style="right:803.90px;top:291.98px;font-size:12.6px;color:#727272;font-weight:normal;font-style:normal;text-align:right;letter-spacing:0.25px;">1,729</div>
<div class="t" style="right:740.20px;top:291.98px;font-size:12.6px;color:#727272;font-weight:normal;font-style:normal;text-align:right;letter-spacing:0.25px;">107,532</div>
<div class="t" style="left:388.50px;top:309.18px;font-size:12.4px;color:#3a3a3a;font-weight:normal;font-style:normal;-webkit-text-stroke:0.22px #3a3a3a;">Supplies</div>
<div class="t" style="left:468.20px;top:309.24px;font-size:12.1px;color:#999;font-weight:normal;font-style:normal;">Art</div>
<div class="t" style="right:932.40px;top:308.81px;font-size:12.6px;color:#727272;font-weight:normal;font-style:normal;text-align:right;letter-spacing:0.25px;">60</div>
<div class="t" style="right:868.70px;top:308.81px;font-size:12.6px;color:#727272;font-weight:normal;font-style:normal;text-align:right;letter-spacing:0.25px;">6,528</div>
<div class="t" style="right:803.90px;top:308.81px;font-size:12.6px;color:#727272;font-weight:normal;font-style:normal;text-align:right;letter-spacing:0.25px;">3,000</div>
<div class="t" style="right:740.20px;top:308.81px;font-size:12.6px;color:#727272;font-weight:normal;font-style:normal;text-align:right;letter-spacing:0.25px;">27,119</div>
<div class="t" style="left:468.20px;top:326.07px;font-size:12.1px;color:#999;font-weight:normal;font-style:normal;">Binders</div>
<div class="t" style="right:932.40px;top:325.64px;font-size:12.6px;color:#727272;font-weight:normal;font-style:normal;text-align:right;letter-spacing:0.25px;">567</div>
<div class="t" style="right:868.70px;top:325.64px;font-size:12.6px;color:#727272;font-weight:normal;font-style:normal;text-align:right;letter-spacing:0.25px;">30,222</div>
<div class="t" style="right:803.90px;top:325.64px;font-size:12.6px;color:#727272;font-weight:normal;font-style:normal;text-align:right;letter-spacing:0.25px;">5,974</div>
<div class="t" style="right:740.20px;top:325.64px;font-size:12.6px;color:#727272;font-weight:normal;font-style:normal;text-align:right;letter-spacing:0.25px;">203,413</div>
<div class="t" style="left:468.20px;top:342.90px;font-size:12.1px;color:#999;font-weight:normal;font-style:normal;">Envelopes</div>
<div class="t" style="right:932.40px;top:342.47px;font-size:12.6px;color:#727272;font-weight:normal;font-style:normal;text-align:right;letter-spacing:0.25px;">20</div>
<div class="t" style="right:868.70px;top:342.47px;font-size:12.6px;color:#727272;font-weight:normal;font-style:normal;text-align:right;letter-spacing:0.25px;">6,964</div>
<div class="t" style="right:803.90px;top:342.47px;font-size:12.6px;color:#727272;font-weight:normal;font-style:normal;text-align:right;letter-spacing:0.25px;">906</div>
<div class="t" style="right:740.20px;top:342.47px;font-size:12.6px;color:#727272;font-weight:normal;font-style:normal;text-align:right;letter-spacing:0.25px;">16,476</div>
<div class="t" style="left:468.20px;top:359.73px;font-size:12.1px;color:#999;font-weight:normal;font-style:normal;">Fasteners</div>
<div class="t" style="right:932.40px;top:359.30px;font-size:12.6px;color:#727272;font-weight:normal;font-style:normal;text-align:right;letter-spacing:0.25px;">18</div>
<div class="t" style="right:868.70px;top:359.30px;font-size:12.6px;color:#727272;font-weight:normal;font-style:normal;text-align:right;letter-spacing:0.25px;">950</div>
<div class="t" style="right:803.90px;top:359.30px;font-size:12.6px;color:#727272;font-weight:normal;font-style:normal;text-align:right;letter-spacing:0.25px;">914</div>
<div class="t" style="right:740.20px;top:359.30px;font-size:12.6px;color:#727272;font-weight:normal;font-style:normal;text-align:right;letter-spacing:0.25px;">3,024</div>
<div class="t" style="left:468.20px;top:376.56px;font-size:12.1px;color:#999;font-weight:normal;font-style:normal;">Labels</div>
<div class="t" style="right:932.40px;top:376.13px;font-size:12.6px;color:#727272;font-weight:normal;font-style:normal;text-align:right;letter-spacing:0.25px;">25</div>
<div class="t" style="right:868.70px;top:376.13px;font-size:12.6px;color:#727272;font-weight:normal;font-style:normal;text-align:right;letter-spacing:0.25px;">5,546</div>
<div class="t" style="right:803.90px;top:376.13px;font-size:12.6px;color:#727272;font-weight:normal;font-style:normal;text-align:right;letter-spacing:0.25px;">1,400</div>
<div class="t" style="right:740.20px;top:376.13px;font-size:12.6px;color:#727272;font-weight:normal;font-style:normal;text-align:right;letter-spacing:0.25px;">12,486</div>
<div class="t" style="left:468.20px;top:393.39px;font-size:12.1px;color:#999;font-weight:normal;font-style:normal;">Paper</div>
<div class="t" style="right:932.40px;top:392.96px;font-size:12.6px;color:#727272;font-weight:normal;font-style:normal;text-align:right;letter-spacing:0.25px;">103</div>
<div class="t" style="right:868.70px;top:392.96px;font-size:12.6px;color:#727272;font-weight:normal;font-style:normal;text-align:right;letter-spacing:0.25px;">34,054</div>
<div class="t" style="right:803.90px;top:392.96px;font-size:12.6px;color:#727272;font-weight:normal;font-style:normal;text-align:right;letter-spacing:0.25px;">5,178</div>
<div class="t" style="right:740.20px;top:392.96px;font-size:12.6px;color:#727272;font-weight:normal;font-style:normal;text-align:right;letter-spacing:0.25px;">78,479</div>
<div class="t" style="left:468.20px;top:410.22px;font-size:12.1px;color:#999;font-weight:normal;font-style:normal;">Storage</div>
<div class="t" style="right:932.40px;top:409.79px;font-size:12.6px;color:#727272;font-weight:normal;font-style:normal;text-align:right;letter-spacing:0.25px;">63</div>
<div class="t" style="right:868.70px;top:409.79px;font-size:12.6px;color:#727272;font-weight:normal;font-style:normal;text-align:right;letter-spacing:0.25px;">21,279</div>
<div class="t" style="right:803.90px;top:409.79px;font-size:12.6px;color:#727272;font-weight:normal;font-style:normal;text-align:right;letter-spacing:0.25px;">3,158</div>
<div class="t" style="right:740.20px;top:409.79px;font-size:12.6px;color:#727272;font-weight:normal;font-style:normal;text-align:right;letter-spacing:0.25px;">223,844</div>
<div class="t" style="left:468.20px;top:427.05px;font-size:12.1px;color:#999;font-weight:normal;font-style:normal;">Supplies</div>
<div class="t" style="right:932.40px;top:426.62px;font-size:12.6px;color:#727272;font-weight:normal;font-style:normal;text-align:right;letter-spacing:0.25px;">15</div>
<div class="t" style="right:868.70px;top:426.62px;font-size:12.6px;color:#727272;font-weight:normal;font-style:normal;text-align:right;letter-spacing:0.25px;">-1,189</div>
<div class="t" style="right:803.90px;top:426.62px;font-size:12.6px;color:#727272;font-weight:normal;font-style:normal;text-align:right;letter-spacing:0.25px;">647</div>
<div class="t" style="right:740.20px;top:426.62px;font-size:12.6px;color:#727272;font-weight:normal;font-style:normal;text-align:right;letter-spacing:0.25px;">46,674</div>
<div class="t" style="left:468.20px;top:443.88px;font-size:12.1px;color:#999;font-weight:normal;font-style:normal;">Total</div>
<div class="t" style="right:932.40px;top:443.45px;font-size:12.6px;color:#3d3d3d;font-weight:normal;font-style:normal;text-align:right;letter-spacing:0.25px;-webkit-text-stroke:0.15px #3d3d3d;">948</div>
<div class="t" style="right:868.70px;top:443.45px;font-size:12.6px;color:#3d3d3d;font-weight:normal;font-style:normal;text-align:right;letter-spacing:0.25px;-webkit-text-stroke:0.15px #3d3d3d;">122,491</div>
<div class="t" style="right:803.90px;top:443.45px;font-size:12.6px;color:#3d3d3d;font-weight:normal;font-style:normal;text-align:right;letter-spacing:0.25px;-webkit-text-stroke:0.15px #3d3d3d;">22,906</div>
<div class="t" style="right:740.20px;top:443.45px;font-size:12.6px;color:#3d3d3d;font-weight:normal;font-style:normal;text-align:right;letter-spacing:0.25px;-webkit-text-stroke:0.15px #3d3d3d;">719,047</div>
<div class="t" style="left:388.50px;top:460.65px;font-size:12.4px;color:#3a3a3a;font-weight:normal;font-style:normal;-webkit-text-stroke:0.22px #3a3a3a;">Technology</div>
<div class="t" style="left:468.20px;top:460.71px;font-size:12.1px;color:#999;font-weight:normal;font-style:normal;">Accessories</div>
<div class="t" style="right:932.40px;top:460.28px;font-size:12.6px;color:#727272;font-weight:normal;font-style:normal;text-align:right;letter-spacing:0.25px;">61</div>
<div class="t" style="right:868.70px;top:460.28px;font-size:12.6px;color:#727272;font-weight:normal;font-style:normal;text-align:right;letter-spacing:0.25px;">41,937</div>
<div class="t" style="right:803.90px;top:460.28px;font-size:12.6px;color:#727272;font-weight:normal;font-style:normal;text-align:right;letter-spacing:0.25px;">2,976</div>
<div class="t" style="right:740.20px;top:460.28px;font-size:12.6px;color:#727272;font-weight:normal;font-style:normal;text-align:right;letter-spacing:0.25px;">167,380</div>
<div class="t" style="left:468.20px;top:477.54px;font-size:12.1px;color:#999;font-weight:normal;font-style:normal;">Copiers</div>
<div class="t" style="right:932.40px;top:477.11px;font-size:12.6px;color:#727272;font-weight:normal;font-style:normal;text-align:right;letter-spacing:0.25px;">11</div>
<div class="t" style="right:868.70px;top:477.11px;font-size:12.6px;color:#727272;font-weight:normal;font-style:normal;text-align:right;letter-spacing:0.25px;">55,618</div>
<div class="t" style="right:803.90px;top:477.11px;font-size:12.6px;color:#727272;font-weight:normal;font-style:normal;text-align:right;letter-spacing:0.25px;">234</div>
<div class="t" style="right:740.20px;top:477.11px;font-size:12.6px;color:#727272;font-weight:normal;font-style:normal;text-align:right;letter-spacing:0.25px;">149,528</div>
<div class="t" style="left:468.20px;top:494.37px;font-size:12.1px;color:#999;font-weight:normal;font-style:normal;">Machines</div>
<div class="t" style="right:932.40px;top:493.94px;font-size:12.6px;color:#727272;font-weight:normal;font-style:normal;text-align:right;letter-spacing:0.25px;">35</div>
<div class="t" style="right:868.70px;top:493.94px;font-size:12.6px;color:#727272;font-weight:normal;font-style:normal;text-align:right;letter-spacing:0.25px;">3,385</div>
<div class="t" style="right:803.90px;top:493.94px;font-size:12.6px;color:#727272;font-weight:normal;font-style:normal;text-align:right;letter-spacing:0.25px;">440</div>
<div class="t" style="right:740.20px;top:493.94px;font-size:12.6px;color:#727272;font-weight:normal;font-style:normal;text-align:right;letter-spacing:0.25px;">189,239</div>
<div class="t" style="left:468.20px;top:511.20px;font-size:12.1px;color:#999;font-weight:normal;font-style:normal;">Phones</div>
<div class="t" style="right:932.40px;top:510.77px;font-size:12.6px;color:#727272;font-weight:normal;font-style:normal;text-align:right;letter-spacing:0.25px;">137</div>
<div class="t" style="right:868.70px;top:510.77px;font-size:12.6px;color:#727272;font-weight:normal;font-style:normal;text-align:right;letter-spacing:0.25px;">44,516</div>
<div class="t" style="right:803.90px;top:510.77px;font-size:12.6px;color:#727272;font-weight:normal;font-style:normal;text-align:right;letter-spacing:0.25px;">3,289</div>
<div class="t" style="right:740.20px;top:510.77px;font-size:12.6px;color:#727272;font-weight:normal;font-style:normal;text-align:right;letter-spacing:0.25px;">330,007</div>
<div class="t" style="left:468.20px;top:528.03px;font-size:12.1px;color:#999;font-weight:normal;font-style:normal;">Total</div>
<div class="t" style="right:932.40px;top:527.60px;font-size:12.6px;color:#3d3d3d;font-weight:normal;font-style:normal;text-align:right;letter-spacing:0.25px;-webkit-text-stroke:0.15px #3d3d3d;">244</div>
<div class="t" style="right:868.70px;top:527.60px;font-size:12.6px;color:#3d3d3d;font-weight:normal;font-style:normal;text-align:right;letter-spacing:0.25px;-webkit-text-stroke:0.15px #3d3d3d;">145,455</div>
<div class="t" style="right:803.90px;top:527.60px;font-size:12.6px;color:#3d3d3d;font-weight:normal;font-style:normal;text-align:right;letter-spacing:0.25px;-webkit-text-stroke:0.15px #3d3d3d;">6,939</div>
<div class="t" style="right:740.20px;top:527.60px;font-size:12.6px;color:#3d3d3d;font-weight:normal;font-style:normal;text-align:right;letter-spacing:0.25px;-webkit-text-stroke:0.15px #3d3d3d;">836,154</div>
<div class="t" style="left:388.50px;top:544.80px;font-size:12.4px;color:#3a3a3a;font-weight:normal;font-style:normal;-webkit-text-stroke:0.22px #3a3a3a;">Grand Total</div>
<div class="t" style="right:932.40px;top:544.43px;font-size:12.6px;color:#3d3d3d;font-weight:normal;font-style:normal;text-align:right;letter-spacing:0.25px;-webkit-text-stroke:0.15px #3d3d3d;">1,561</div>
<div class="t" style="right:868.70px;top:544.43px;font-size:12.6px;color:#3d3d3d;font-weight:normal;font-style:normal;text-align:right;letter-spacing:0.25px;-webkit-text-stroke:0.15px #3d3d3d;">286,397</div>
<div class="t" style="right:803.90px;top:544.43px;font-size:12.6px;color:#3d3d3d;font-weight:normal;font-style:normal;text-align:right;letter-spacing:0.25px;-webkit-text-stroke:0.15px #3d3d3d;">37,873</div>
<div class="t" style="right:740.20px;top:544.43px;font-size:12.6px;color:#3d3d3d;font-weight:normal;font-style:normal;text-align:right;letter-spacing:0.25px;-webkit-text-stroke:0.15px #3d3d3d;">2,297,201</div>
<div class="a" style="left:1534px;top:592px;width:2px;height:16px;background:#fff;"></div>
<div class="a" style="left:1535px;top:594px;width:1px;height:13px;background:#3a3a44;"></div>
<div class="a" style="left:0px;top:774px;width:1536px;height:29px;background:#e6e6e6;"></div>
<div class="a" style="left:0px;top:774px;width:1536px;height:1px;background:#d6d6d6;"></div>
<svg class="a" style="left:8.5px;top:784px;" width="7" height="9" viewBox="0 0 7 9" fill="none"><rect x="0.6" y="0.6" width="5.8" height="7.8" rx="1.6" stroke="#808080" stroke-width="1"/><path d="M0.6 2.6c1.2 .8 4.6 .8 5.8 0" stroke="#808080" stroke-width="0.9"/></svg>
<div class="t" style="left:20.50px;top:783.80px;font-size:12.4px;color:#777;font-weight:normal;font-style:normal;">Data Source</div>
<div class="a" style="left:130px;top:775px;width:55px;height:28px;background:#f7f7f7;"></div>
<div class="t" style="left:136.50px;top:783.43px;font-size:12.6px;color:#3a3a3a;font-weight:normal;font-style:normal;-webkit-text-stroke:0.22px #3a3a3a;">Sheet 1</div>
<div class="a" style="left:185px;top:775px;width:1px;height:28px;background:#d2d2d2;"></div>
<div class="a" style="left:210px;top:775px;width:1px;height:28px;background:#d2d2d2;"></div>
<div class="a" style="left:236px;top:775px;width:1px;height:28px;background:#d2d2d2;"></div>
<div class="a" style="left:262px;top:775px;width:1px;height:28px;background:#d2d2d2;"></div>
<svg class="a" style="left:192px;top:782px;" width="14" height="14" viewBox="0 0 14 14" fill="none"><rect x="1" y="1.2" width="8.8" height="8.8" rx="1.3" stroke="#707070" stroke-width="1.1"/><path d="M5 8V6.5M6.8 8V5.5" stroke="#999" stroke-width="1"/><rect x="7" y="7.5" width="6" height="6" fill="#e6e6e6"/><path d="M9.8 7v6.5M6.8 10.1h6.5" stroke="#555" stroke-width="1.6"/></svg>
<svg class="a" style="left:218px;top:782px;" width="14" height="14" viewBox="0 0 14 14" fill="none"><rect x="0.8" y="1.2" width="8.8" height="8.8" rx="1.3" stroke="#707070" stroke-width="1.1"/><path d="M0.8 5.6h8.8M5.2 1.2v8.8" stroke="#707070" stroke-width="1.1"/><rect x="7" y="7.5" width="6" height="6" fill="#e6e6e6"/><path d="M9.8 7v6.5M6.8 10.1h6.5" stroke="#555" stroke-width="1.6"/></svg>
<svg class="a" style="left:244px;top:782px;" width="14" height="14" viewBox="0 0 14 14" fill="none"><path d="M0.8 1l3.8 2.2L8.6 1v8.4l-4 1.4-3.8-1.4z M4.6 3.2v7.6" stroke="#707070" stroke-width="1.1" stroke-linejoin="round"/><rect x="7" y="7.5" width="6" height="6" fill="#e6e6e6"/><path d="M9.5 7v6.5M6.5 10.1h6.5" stroke="#555" stroke-width="1.6"/></svg>
<div class="a" style="left:0px;top:803px;width:1536px;height:18px;background:#ececec;"></div>
<div class="a" style="left:0px;top:803px;width:1536px;height:1px;background:#dadada;"></div>
<div class="t" style="left:2.60px;top:808.93px;font-size:11.3px;color:#444;font-weight:normal;font-style:normal;letter-spacing:-0.25px;">84 marks</div>
<div class="t" style="left:64.00px;top:808.93px;font-size:11.3px;color:#444;font-weight:normal;font-style:normal;letter-spacing:-0.3px;">21 rows by 4 columns</div>
<div class="t" style="left:182.00px;top:808.93px;font-size:11.3px;color:#444;font-weight:normal;font-style:normal;letter-spacing:-0.3px;">SUM of Measure Values: 2,623,032</div>
<div class="a" style="left:1202px;top:804px;width:1px;height:17px;background:#d6d6d6;"></div>
<div class="a" style="left:1326px;top:804px;width:1px;height:17px;background:#d6d6d6;"></div>
<div class="a" style="left:1352px;top:804px;width:1px;height:17px;background:#d6d6d6;"></div>
<div class="a" style="left:1378px;top:804px;width:1px;height:17px;background:#d6d6d6;"></div>
<div class="a" style="left:1423px;top:804px;width:1px;height:17px;background:#d6d6d6;"></div>
<div class="a" style="left:1480px;top:804px;width:1px;height:17px;background:#d6d6d6;"></div>
<svg class="a" style="left:1206px;top:807px;" width="9" height="12" viewBox="0 0 9 12" fill="none"><circle cx="4.5" cy="3" r="2.3" stroke="#888" stroke-width="1"/><path d="M0.8 11.2V9.2a2 2 0 0 1 2-2h3.4a2 2 0 0 1 2 2v2z" stroke="#888" stroke-width="1"/></svg>
<div class="t" style="left:1222.50px;top:809.02px;font-size:11.2px;color:#444;font-weight:normal;font-style:normal;letter-spacing:-0.2px;">emma.marler</div>
<svg class="a" style="left:1312px;top:812px;" width="7" height="4" viewBox="0 0 7 4" fill="none"><path d="M0 0h7L3.5 4z" fill="#222"/></svg>
<svg class="a" style="left:1430px;top:811px;" width="45" height="6" viewBox="0 0 45 6" fill="none"><g fill="#c4c4c4"><rect x="0" y="0" width="1" height="5.5"/><path d="M5 0v5.5L1.5 2.75z"/><path d="M16 0v5.5l-3 -2.75z"/><path d="M28 0v5.5l3 -2.75z"/><path d="M39 0v5.5l3.5 -2.75z"/><rect x="43" y="0" width="1" height="5.5"/></g></svg>
<svg class="a" style="left:1487px;top:809px;" width="9" height="9" viewBox="0 0 9 9" fill="none"><g fill="#a8a8a8"><rect x="0" y="0" width="2" height="2"/><rect x="0" y="3.3" width="2" height="2"/><rect x="0" y="6.6" width="2" height="2"/><rect x="3.3" y="0" width="2" height="2"/><rect x="3.3" y="3.3" width="2" height="2"/><rect x="3.3" y="6.6" width="2" height="2"/><rect x="6.6" y="0" width="2" height="2"/><rect x="6.6" y="3.3" width="2" height="2"/><rect x="6.6" y="6.6" width="2" height="2"/></g></svg>
<svg class="a" style="left:1505px;top:809px;" width="9" height="9" viewBox="0 0 9 9" fill="none"><rect x="0" y="0" width="9" height="5" fill="#b5b5b5"/><g fill="#b5b5b5"><rect x="0" y="7" width="2" height="2"/><rect x="3.5" y="7" width="2" height="2"/><rect x="7" y="7" width="2" height="2"/></g></svg>
<svg class="a" style="left:1522px;top:809px;" width="9" height="9" viewBox="0 0 9 9" fill="none"><rect x="0" y="0" width="9" height="9" rx="0.8" fill="#656565"/></svg>
</body></html>
